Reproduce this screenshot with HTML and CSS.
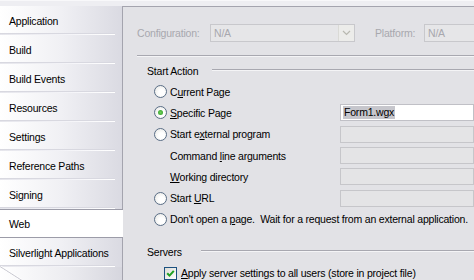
FILE: index.html
```html
<!DOCTYPE html>
<html>
<head>
<meta charset="utf-8">
<link rel="stylesheet" href="styles.css">
</head>
<body>
<div class="app">
  <div class="sidebar">
    <div class="tab">Application</div>
    <div class="tab">Build</div>
    <div class="tab">Build Events</div>
    <div class="tab">Resources</div>
    <div class="tab">Settings</div>
    <div class="tab">Reference Paths</div>
    <div class="tab">Signing</div>
    <div class="tab active">Web</div>
    <div class="tab">Silverlight Applications</div>
    <div class="corner"></div>
  </div>
  <div class="main">
    <div class="config">
      <span class="clabel">Configuration:</span>
      <div class="combo wide"><span>N/A</span><span class="arrow"><svg width="9" height="6" viewBox="0 0 9 6"><path d="M1 1 L4.5 4.5 L8 1" fill="none" stroke="#b8b8b0" stroke-width="1.2"/></svg></span></div>
      <span class="clabel plat">Platform:</span>
      <div class="combo narrow"><span>N/A</span></div>
    </div>
    <div class="rule"></div>
    <div class="group-head"><span>Start Action</span><div class="gline"></div></div>
    <div class="rows">
      <div class="opt"><span class="radio"></span><span>C<u>u</u>rrent Page</span></div>
      <div class="field"></div>
      <div class="opt"><span class="radio on"></span><span><u>S</u>pecific Page</span></div>
      <div class="field"><div class="box white"><span class="sel">Form1.wgx</span></div></div>
      <div class="opt"><span class="radio"></span><span>Start e<u>x</u>ternal program</span></div>
      <div class="field"><div class="box"></div></div>
      <div class="opt sub"><span>Command <u>l</u>ine arguments</span></div>
      <div class="field"><div class="box"></div></div>
      <div class="opt sub"><span><u>W</u>orking directory</span></div>
      <div class="field"><div class="box"></div></div>
      <div class="opt"><span class="radio"></span><span>Start <u>U</u>RL</span></div>
      <div class="field"><div class="box"></div></div>
      <div class="opt full"><span class="radio"></span><span>Don't open a <u>p</u>age.&nbsp; Wait for a request from an external application.</span></div>
    </div>
    <div class="group-head servers"><span>Servers</span><div class="gline"></div></div>
    <div class="check-row"><span class="check"><svg width="9" height="9" viewBox="0 0 9 9"><path d="M1.2 4.2 L3.5 6.6 L7.8 1.8" fill="none" stroke="#21a121" stroke-width="2"/></svg></span><span><u>A</u>pply server settings to all users (store in project file)</span></div>
  </div>
</div>
</body>
</html>
```
FILE: styles.css
```css
* { box-sizing: border-box; }
html, body { margin: 0; padding: 0; }
body {
  width: 474px;
  height: 280px;
  overflow: hidden;
  font-family: "Liberation Sans", Arial, sans-serif;
  font-size: 10.5px;
  letter-spacing: -0.2px;
  color: #000;
  background: #eeeef2;
}
u { text-decoration: underline; text-underline-offset: 1px; }
.app {
  display: flex;
  height: 280px;
  padding-top: 5px;
  border-top: 1px solid #f8f8fa;
}
.sidebar {
  width: 122px;
  flex: none;
  display: flex;
  flex-direction: column;
  position: relative;
  background: linear-gradient(to right, #ffffff 0%, #ececf0 55%, #d6d6de 100%);
}
.tab {
  height: 29px;
  padding-left: 9px;
  display: flex;
  align-items: center;
  flex: none;
  position: relative;
  white-space: nowrap;
  background: linear-gradient(to right, #ffffff 0%, #f0f0f4 50%, #dadae2 100%);
}
.tab::after {
  content: "";
  position: absolute;
  left: 0;
  right: 7px;
  bottom: 0;
  height: 1px;
  background: linear-gradient(to right, #e6e6ec, #f4f4f8 60%, #ffffff);
  box-shadow: 0 -1px 0 #d8d8e0;
}
.tab.active {
  background: #ffffff;
  border-top: 1px solid #9c9ca8;
  border-bottom: 1px solid #9c9ca8;
  margin-right: -1px;
  z-index: 2;
}
.tab.active::after { display: none; }
.corner {
  position: absolute;
  left: 0;
  bottom: 0;
  width: 22px;
  height: 14px;
  background: linear-gradient(to top right, transparent 45%, #c8c8d0 48%, #ffffff 52%, transparent 55%);
}
.main {
  flex: 1;
  background: #e2e2e6;
  border-left: 1px solid #a4a4ae;
  border-top: 1px solid #a4a4ae;
  padding-left: 14px;
  position: relative;
  z-index: 1;
}
.config {
  display: flex;
  align-items: center;
  height: 18px;
  margin-top: 17px;
  color: #a8a8ae;
  white-space: nowrap;
}
.clabel { width: 73px; }
.clabel.plat { width: 49px; margin-left: 20px; }
.combo {
  height: 18px;
  border: 1px solid #c8c8cc;
  background: #e6e6e8;
  display: flex;
  align-items: center;
  padding-left: 3px;
  color: #a8a8ae;
}
.combo.wide { width: 145px; justify-content: space-between; }
.combo.narrow { flex: 1; margin-right: -20px; }
.arrow {
  width: 16px;
  height: 16px;
  background: #ececea;
  border-left: 1px solid #dadad6;
  display: flex;
  align-items: center;
  justify-content: center;
}
.rule {
  height: 2px;
  margin-top: 13px;
  border-top: 1px solid #a8a8b0;
  border-bottom: 1px solid #f4f4f6;
}
.group-head {
  display: flex;
  align-items: center;
  margin-top: 7px;
  height: 14px;
  padding-left: 10px;
}
.group-head span { white-space: nowrap; }
.gline {
  flex: 1;
  height: 2px;
  margin-left: 14px;
  margin-top: -2px;
  border-top: 1px solid #a8a8b0;
  border-bottom: 1px solid #f4f4f6;
}
.servers { margin-top: 14.5px; }
.servers .gline { margin-left: 19px; }
.rows {
  display: grid;
  grid-template-columns: 186px 1fr;
  grid-auto-rows: 21.3px;
  margin-top: 3px;
  padding-left: 17px;
}
.opt {
  display: flex;
  align-items: center;
  white-space: nowrap;
}
.opt.full { grid-column: 1 / span 2; }
.opt.sub { padding-left: 16px; }
.field { display: flex; align-items: center; }
.box {
  flex: 1;
  height: 17px;
  border: 1px solid #c6c6ca;
  background: #e4e4e6;
  display: flex;
  align-items: center;
  padding-left: 2px;
}
.box.white { background: #ffffff; border-color: #c0c0c6; }
.sel { background: #c6c6cc; padding: 0 1px; line-height: 13px; }
.radio {
  width: 13px;
  height: 13px;
  border-radius: 50%;
  border: 1px solid #5a6e86;
  background: radial-gradient(circle at 60% 60%, #ffffff 30%, #e4e4e0 100%);
  margin-right: 3px;
  flex: none;
  display: flex;
  align-items: center;
  justify-content: center;
}
.radio.on::after {
  content: "";
  width: 5px;
  height: 5px;
  border-radius: 50%;
  background: radial-gradient(circle, #6ecf5a, #2a9a22);
}
.check-row {
  display: flex;
  align-items: center;
  margin-top: 8px;
  padding-left: 27px;
  white-space: nowrap;
}
.check {
  width: 13px;
  height: 13px;
  border: 1px solid #1c5180;
  background: linear-gradient(135deg, #dcdcd6, #ffffff);
  margin-right: 4px;
  display: flex;
  align-items: center;
  justify-content: center;
  flex: none;
}
```
